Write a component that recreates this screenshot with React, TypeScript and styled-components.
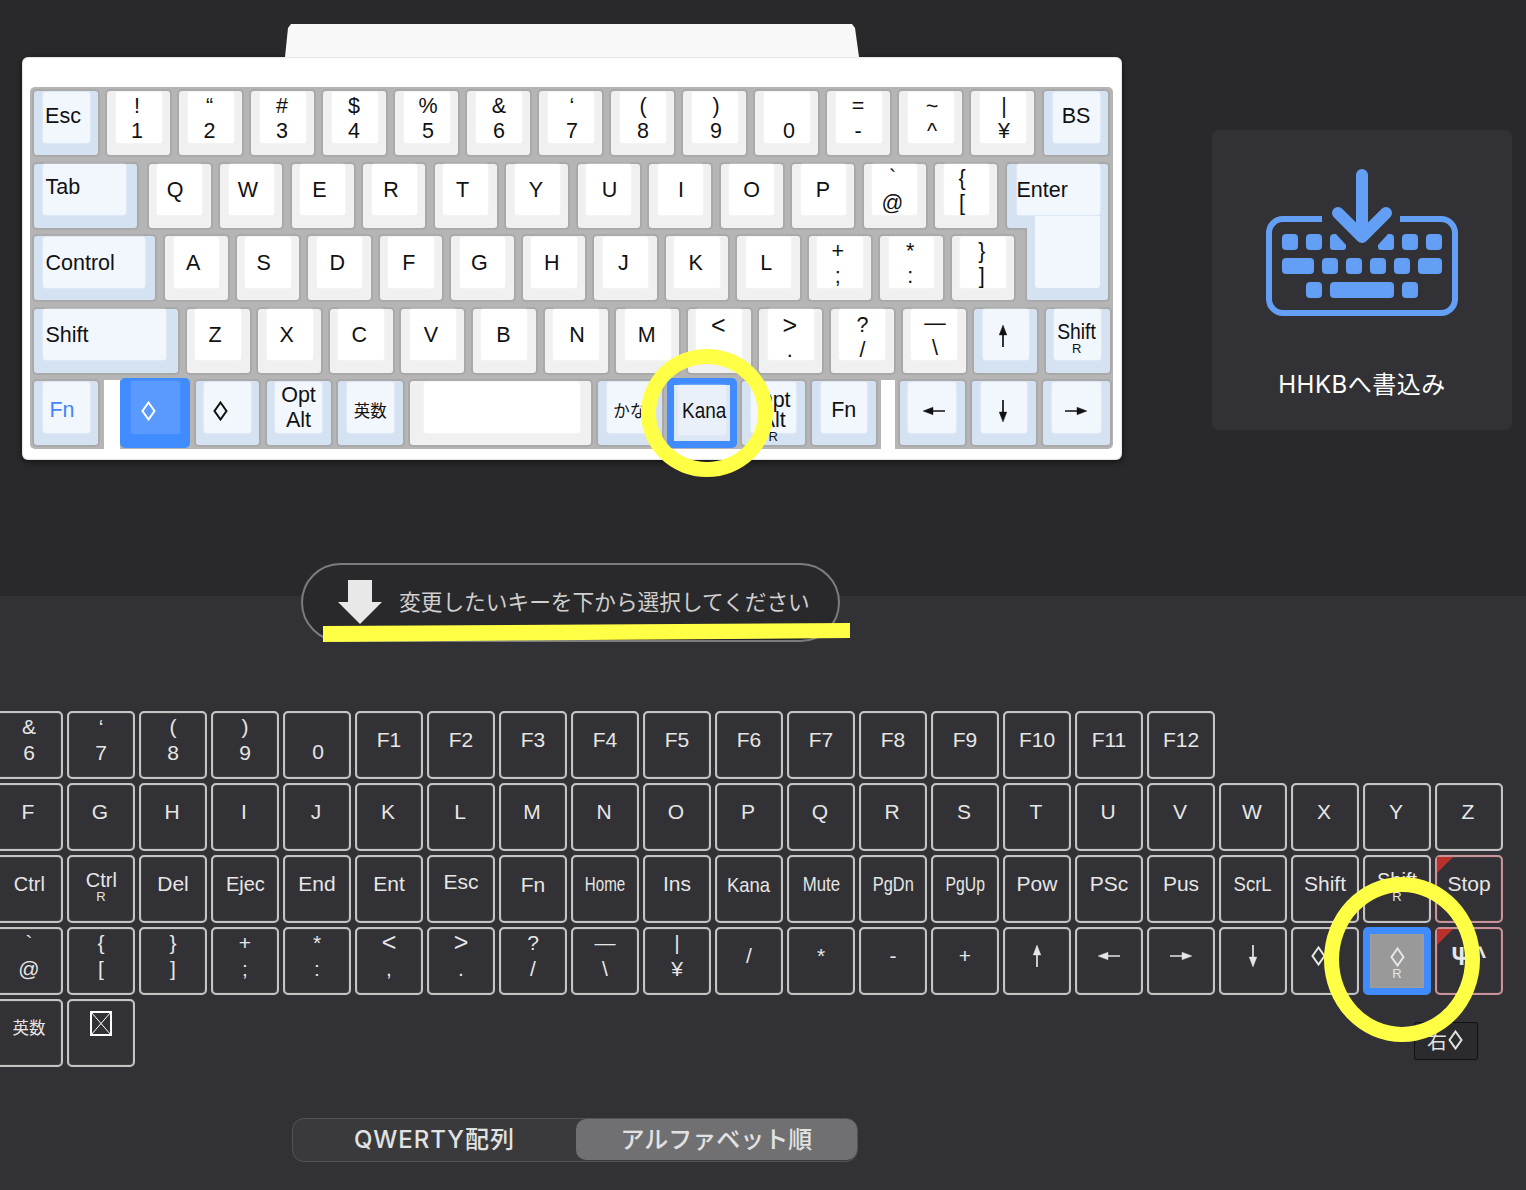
import React from "react";
import styled, { createGlobalStyle } from "styled-components";

type Cap = {
  lines?: string[];
  sub?: string;
  w?: number;
  ml?: number;
  mod?: boolean;
  left?: boolean;
  squeeze?: number;
  size?: number;
  firstSize?: number;
  dx?: number;
  dy?: number;
  face?: string;
  bold?: boolean;
  icon?: "up" | "down" | "left" | "right" | "cross" | "diamond";
  variant?: "blue" | "picked";
  warn?: boolean;
  fnBlue?: boolean;
};

const one = (a: string, extra: Cap = {}): Cap => ({ lines: [a], ...extra });
const two = (a: string, b: string, extra: Cap = {}): Cap => ({ lines: [a, b], ...extra });
const letters = (s: string, extra: Cap = {}): Cap[] => s.split("").map((c) => one(c, extra));
const nudged = (s: string, dxs: number[]): Cap[] => s.split("").map((c, i) => one(c, { dx: dxs[i] }));

const rowOne: Cap[] = [
  one("Esc", { mod: true, w: 68, dx: -3, dy: -2 }),
  two("!", "1", { dx: -1.5 }), two("“", "2", { dx: -1 }), two("#", "3", { dx: -0.5 }),
  two("$", "4", { dx: -0.5 }), two("%", "5", { dx: 1.5 }), two("&", "6", { dx: 0.5 }),
  two("‘", "7", { dx: 1.5 }), two("(", "8", { dx: 0.5 }), two(")", "9", { dx: 1.5 }),
  two("", "0", { dx: 2.5 }),
  two("=", "-", { dx: -0.5 }), two("~", "^", { dx: 1.5 }), two("|", "¥", { dx: 1.5 }),
  one("BS", { mod: true, w: 68, ml: 1, dy: -2 }),
];

const rowTwo: Cap[] = [
  one("Tab", { mod: true, w: 107, left: true, dx: 1, dy: -3, face: "0 3px 0 0" }),
  one("Q", { ml: 2, dx: -4.5 }),
  ...nudged("WERTYUIOP", [-3, -3, -3, -3, -1, 1, 1, 0, 0]),
  two("`", "@", { dx: -2 }), two("{", "[", { dx: -4 }),
];

const rowThree: Cap[] = [
  one("Control", { mod: true, w: 125, left: true, dx: 1, face: "0 2px 0 0" }),
  one("A", { ml: 1, dx: -3 }),
  ...nudged("SDFGHJKL", [-4, -2, -2, -3, -2, -2, -1, -2]),
  two("+", ";", { dx: -2 }), two("*", ":", { dx: -1 }), two("}", "]", { dx: -1 }),
];

const rowFour: Cap[] = [
  one("Shift", { mod: true, w: 148, left: true, dx: 1, face: "0 4px 0 0" }),
  ...nudged("ZXCVBNM", [-3, -3, -2, -2, -1, 1, -1]),
  two("<", ",", { dx: -1, firstSize: 25, dy: 2 }),
  two(">", ".", { dx: -1, firstSize: 25, dy: 2 }),
  two("?", "/", { dx: 0, dy: 2 }),
  two("—", "\\", { dx: 1 }),
  { icon: "up", mod: true, dx: -3 },
  one("Shift", { mod: true, sub: "R", squeeze: 0.9, dx: -1, dy: 3, w: 68 }),
];

const spaceLeft: Cap[] = [
  { icon: "diamond", variant: "blue", w: 70, dx: -7, dy: 2 },
  { icon: "diamond", mod: true, w: 67.5, dx: -6.5, dy: 2 },
  two("Opt", "Alt", { mod: true, w: 68, dy: -1 }),
  one("英数", { mod: true, w: 68.5, size: 16.5, dy: 3 }),
  { w: 184.5, face: "0 2px 0 5px" },
  one("かな", { mod: true, w: 67.5, size: 16.5, dy: 3 }),
  one("Kana", { mod: true, variant: "picked", w: 69.5, squeeze: 0.88, dx: 2 }),
  two("Opt", "Alt", { mod: true, sub: "R", w: 66.5, dy: 8 }),
  one("Fn", { mod: true, w: 67.5, dy: 2 }),
];

const arrowsRight: Cap[] = [
  { icon: "left", mod: true, w: 69, dx: 2, dy: 2 },
  { icon: "down", mod: true, w: 67.5, dx: -1, dy: 2 },
  { icon: "right", mod: true, w: 70.5, dy: 2 },
];

const chooser: Cap[] = [
  two("&", "6"), two("‘", "7"), two("(", "8"), two(")", "9"), two("", "0", { dx: 1 }),
  one("F1"), one("F2"), one("F3"), one("F4"), one("F5"), one("F6"),
  one("F7"), one("F8"), one("F9"), one("F10"), one("F11"), one("F12"),
  { lines: [] }, { lines: [] }, { lines: [] }, { lines: [] },
  ...letters("FGHIJKLMNOPQRSTUVWXYZ", { dx: -1 }),
  one("Ctrl", { squeeze: 0.95 }), one("Ctrl", { sub: "R", squeeze: 0.95, dy: 3 }),
  one("Del"), one("Ejec", { squeeze: 0.95 }), one("End"), one("Ent"), one("Esc", { dy: -2 }), one("Fn", { dy: 1 }),
  one("Home", { squeeze: 0.72 }), one("Ins"), one("Kana", { squeeze: 0.88, dy: 1 }),
  one("Mute", { squeeze: 0.8 }), one("PgDn", { squeeze: 0.78 }), one("PgUp", { squeeze: 0.75 }),
  one("Pow"), one("PSc"), one("Pus"), one("ScrL", { squeeze: 0.88 }), one("Shift"),
  one("Shift", { sub: "R", squeeze: 0.95, dy: 3 }), one("Stop", { warn: true }),
  two("`", "@"), two("{", "["), two("}", "]"), two("+", ";"), two("*", ":"),
  two("<", ",", { firstSize: 25 }), two(">", ".", { firstSize: 25 }), two("?", "/"), two("—", "\\"), two("|", "¥"),
  one("/"), one("*"), one("-"), one("+"),
  { icon: "up" }, { icon: "left" }, { icon: "right" }, { icon: "down" },
  { icon: "diamond", dx: -7 },
  { icon: "diamond", sub: "R", variant: "picked", dy: 5 },
  one("Ψ^", { warn: true, size: 25, dy: 1, bold: true }),
  one("英数", { size: 16.5, dy: 1 }), { icon: "cross" },
];

const GlobalStyle = createGlobalStyle`
  html, body {
    margin: 0;
    padding: 0;
    background: #323135;
  }
  * {
    box-sizing: border-box;
  }
`;

const Page = styled.div`
  position: relative;
  width: 1526px;
  height: 1190px;
  overflow: hidden;
  font-family: "Liberation Sans", "Noto Sans CJK JP", sans-serif;
`;

const TopArea = styled.section`
  display: flex;
  align-items: flex-start;
  height: 596px;
  padding: 24px 14px 0 22px;
  background: #29282b;
`;

const KeyboardWrap = styled.div`
  display: flex;
  flex-direction: column;
  width: 1100px;
`;

const TopBar = styled.div`
  width: 574px;
  height: 33px;
  margin-left: 263px;
  background: #f8f8f8;
  border-radius: 4px 4px 0 0;
  clip-path: polygon(0 100%, 3px 4px, 6px 0, 567px 0, 570px 4px, 574px 100%);
`;

const Board = styled.div`
  padding: 30px 8px 11px;
  background: #fff;
  border-radius: 6px;
  box-shadow: 0 2px 6px rgba(0, 0, 0, 0.55), inset 0 0 2px rgba(0, 0, 0, 0.35);
`;

const Plate = styled.div`
  display: flex;
  flex-direction: column;
  gap: 4.5px;
  width: 1083px;
  padding: 2px;
  font-size: 21.5px;
  background: #b5b5b5;
  border-radius: 5px;
`;

const Row = styled.div<{ $gap: number }>`
  display: flex;
  align-items: flex-start;
  gap: ${(p) => p.$gap}px;
  height: 68px;
`;

const Key = styled.div<{ $w: number; $ml: number; $mod: boolean; $variant?: string }>`
  flex: none;
  display: flex;
  width: ${(p) => p.$w}px;
  height: ${(p) => (p.$variant ? 70 : 68)}px;
  margin-left: ${(p) => p.$ml}px;
  margin-top: ${(p) => (p.$variant ? -1 : 0)}px;
  padding: ${(p) => (p.$variant === "picked" ? "0 4px 6px" : "0.5px 8.5px 12.5px")};
  color: #111;
  background: ${(p) => (p.$variant === "blue" ? "#408cff" : p.$variant === "picked" ? "#dce7f5" : p.$mod ? "#d5e2f2" : "#f0f0f0")};
  border: ${(p) => (p.$variant === "picked" ? "7px solid #408cff" : p.$variant === "blue" ? "2px solid #408cff" : "2px solid #a9a9a9")};
  border-radius: 5px;
`;

const faceColour = (p: { $mod: boolean; $variant?: string }) =>
  p.$variant === "blue" ? "#5a9aff" : p.$variant === "picked" ? "#e9f0f9" : p.$mod ? "#f2f7fe" : "#fff";

const KeyTop = styled.div<{ $mod: boolean; $variant?: string; $face?: string }>`
  flex: 1;
  display: flex;
  min-width: 0;
  margin: ${(p) => p.$face ?? "0"};
  background: ${faceColour};
  box-shadow: 0 0 2px ${faceColour};
  border-radius: 3px;
  color: ${(p) => (p.$variant === "blue" ? "#fff" : "inherit")};
`;

const EnterTop = styled(Key)`
  padding-left: 10px;
`;

const EnterBottom = styled.div`
  position: relative;
  flex: none;
  display: flex;
  width: 85px;
  height: 86px;
  margin: -18px 0 0 4px;
  padding: 0 8.5px 12.5px 10px;
  background: #d5e2f2;
  border-right: 2px solid #a9a9a9;
  border-bottom: 2px solid #a9a9a9;
  border-bottom-left-radius: 5px;
  border-bottom-right-radius: 5px;

  &::before {
    content: "";
    position: absolute;
    left: 0;
    top: 12px;
    bottom: 0;
    width: 2px;
    background: #a9a9a9;
  }
`;

const EnterFace = styled.div`
  flex: 1;
  background: #f2f7fe;
  border-radius: 0 0 3px 3px;
`;

const Notch = styled.div<{ $w: number }>`
  flex: none;
  width: ${(p) => p.$w}px;
  height: 69px;
  margin: 1px ${(p) => 13 - p.$w}px 0 0;
  background: #fff;
`;

const LegendBox = styled.div<{ $left?: boolean; $dx: number; $dy: number; $size?: number; $blue?: boolean; $bold?: boolean }>`
  flex: 1;
  min-width: 0;
  display: flex;
  flex-direction: column;
  justify-content: center;
  align-items: ${(p) => (p.$left ? "flex-start" : "center")};
  margin-left: ${(p) => (p.$left ? p.$dx : 0)}px;
  padding-top: ${(p) => Math.max(0, p.$dy * 2)}px;
  padding-bottom: ${(p) => Math.max(0, -p.$dy * 2)}px;
  padding-left: ${(p) => (p.$left ? 2 : Math.max(0, p.$dx * 2))}px;
  padding-right: ${(p) => (p.$left ? 0 : Math.max(0, -p.$dx * 2))}px;
  font-size: ${(p) => (p.$size ? `${p.$size}px` : "inherit")};
  font-weight: ${(p) => (p.$bold ? 700 : 400)};
  line-height: 25.5px;
  white-space: pre;
  color: ${(p) => (p.$blue ? "#4585f5" : "inherit")};
`;

const Line = styled.span<{ $squeeze?: number; $tight?: boolean; $size?: number }>`
  display: block;
  min-height: ${(p) => (p.$tight ? 20 : 25)}px;
  font-size: ${(p) => (p.$size ? `${p.$size}px` : "inherit")};
  line-height: ${(p) => (p.$tight ? "20px" : "inherit")};
  transform: scaleX(${(p) => p.$squeeze ?? 1});

  & + & {
    margin-top: ${(p) => (p.$tight ? 7 : 0)}px;
  }
`;

const Sub = styled.span`
  display: block;
  font-size: 13px;
  line-height: 14px;
`;

const ArrowSvg = styled.svg<{ $turn: number }>`
  display: block;
  width: 24px;
  height: 24px;
  fill: currentColor;
  stroke: currentColor;
  transform: rotate(${(p) => p.$turn}deg);
`;

const CrossSvg = styled.svg`
  display: block;
  width: 22px;
  height: 25px;
  margin-bottom: 9px;
`;

const DiamondSvg = styled.svg`
  display: block;
  flex: none;
  width: 15px;
  height: 20px;
  fill: none;
  stroke: currentColor;
  stroke-width: 2;
`;

const Panel = styled.button`
  display: flex;
  flex-direction: column;
  align-items: center;
  flex: none;
  width: 300px;
  height: 300px;
  margin: 106px 0 0 auto;
  padding: 39px 0 0;
  background: #323135;
  border: 0;
  border-radius: 7px;
  color: #fff;
  font-family: inherit;
`;

const PanelIcon = styled.svg`
  display: block;
  width: 192px;
  height: 147px;
  color: #629ff5;
`;

const PanelText = styled.span`
  margin-top: 52px;
  font-family: Inter, "Noto Sans CJK JP", sans-serif;
  font-size: 24px;
  letter-spacing: 0.5px;
  line-height: 34px;
`;

const BottomArea = styled.section`
  display: flex;
  flex-direction: column;
  height: 594px;
  background: #323135;
`;

const Prompt = styled.div`
  position: relative;
  display: flex;
  align-items: center;
  gap: 17px;
  width: 539px;
  height: 79px;
  margin: -33px 0 0 301px;
  padding: 0 0 2px 35px;
  background: #29282b;
  border: 2px solid #7c7c7e;
  border-radius: 40px;
`;

const PromptArrow = styled.svg`
  flex: none;
  width: 44px;
  height: 44px;
  fill: #e8e8e8;
`;

const PromptText = styled.span`
  padding-bottom: 2px;
  font-family: "Noto Sans CJK JP", sans-serif;
  font-size: 21.7px;
  white-space: nowrap;
  color: #cfcfcf;
`;

const Highlight = styled.div`
  position: absolute;
  left: 20px;
  top: 58px;
  width: 527px;
  height: 19px;
  background: #ffff46;
  clip-path: polygon(0 3px, 100% 0, 100% 15px, 0 19px);
`;

const Chooser = styled.div`
  display: grid;
  grid-template-columns: repeat(21, 68px);
  grid-auto-rows: 68px;
  gap: 4px;
  margin: 69px 0 0 -5px;
  font-size: 21px;
`;

const DarkKey = styled.div<{ $warn?: boolean; $picked?: boolean }>`
  position: relative;
  display: flex;
  padding-bottom: ${(p) => (p.$picked ? 4 : 11)}px;
  color: #e6e6e6;
  background: ${(p) => (p.$picked ? "#999" : "transparent")};
  border: ${(p) => (p.$picked ? "7px solid #408cff" : `2px solid ${p.$warn ? "#c8949a" : "#c4c4c4"}`)};
  box-shadow: inset 0 0 1px ${(p) => (p.$warn ? "#c8949a" : "#c4c4c4")};
  border-radius: 5px;

  &::before {
    content: ${(p) => (p.$warn ? '""' : "none")};
    position: absolute;
    left: 0;
    top: 0;
    width: 16px;
    height: 16px;
    background: #b8312a;
    clip-path: polygon(0 0, 100% 0, 0 100%);
  }
`;

const Ghost = styled.div`
  visibility: hidden;
`;

const Tooltip = styled.div`
  position: absolute;
  left: 44px;
  top: 88px;
  z-index: 3;
  display: flex;
  align-items: center;
  gap: 1px;
  width: 64px;
  height: 38px;
  padding: 0 0 2px 12px;
  font-size: 20px;
  color: #e2e2e2;
  background: #2b2a2d;
  border: 1px solid #111;
  border-radius: 2px;
`;

const Toggle = styled.div`
  display: flex;
  width: 566px;
  height: 44px;
  margin: 51px 0 0 292px;
  background: #3a3a3c;
  border: 1.5px solid #535355;
  border-radius: 12px;
  font-family: Inter, "Noto Sans CJK JP", sans-serif;
  font-size: 24px;
  font-weight: 500;
`;

const ToggleItem = styled.div<{ $active?: boolean }>`
  display: flex;
  align-items: center;
  justify-content: center;
  width: ${(p) => (p.$active ? 281 : 283)}px;
  height: 41px;
  padding-bottom: 4px;
  letter-spacing: ${(p) => (p.$active ? 0 : 1)}px;
  color: #e2e2e2;
  background: ${(p) => (p.$active ? "#707072" : "transparent")};
  border-radius: 10px;
`;

const Ring = styled.div<{ $x: number; $y: number; $w: number; $h: number }>`
  position: absolute;
  left: ${(p) => p.$x}px;
  top: ${(p) => p.$y}px;
  z-index: 5;
  width: ${(p) => p.$w}px;
  height: ${(p) => p.$h}px;
  border: 15px solid #ffff46;
  border-radius: 50%;
  pointer-events: none;
`;

const turns = { up: 0, right: 90, down: 180, left: 270 };

function Arrow({ dir }: { dir: keyof typeof turns }) {
  return (
    <ArrowSvg $turn={turns[dir]} viewBox="0 0 24 24">
      <path d="M12 8V23" strokeWidth="1.7" fill="none" />
      <path d="M8.2 11L12 1L15.8 11Z" strokeWidth="0.4" />
    </ArrowSvg>
  );
}

function Diamond() {
  return (
    <DiamondSvg viewBox="0 0 15 20">
      <path d="M7.5 1.5L13.5 10L7.5 18.5L1.5 10Z" />
    </DiamondSvg>
  );
}

function Legend({ cap }: { cap: Cap }) {
  return (
    <LegendBox $left={cap.left} $dx={cap.dx ?? 0} $dy={cap.dy ?? 0} $size={cap.size} $blue={cap.fnBlue} $bold={cap.bold}>
      {cap.icon === "cross" ? (
        <CrossSvg viewBox="0 0 22 25">
          <rect x="1" y="1" width="20" height="23" fill="none" stroke="#fff" strokeWidth="2" />
          <path d="M1 1L21 24M21 1L1 24" fill="none" stroke="#fff" strokeWidth="1" />
        </CrossSvg>
      ) : cap.icon === "diamond" ? (
        <Diamond />
      ) : cap.icon ? (
        <Arrow dir={cap.icon} />
      ) : null}
      {cap.lines?.map((text, i) => (
        <Line key={i} $squeeze={cap.squeeze} $tight={!!cap.sub} $size={i === 0 ? cap.firstSize : undefined}>
          {text}
        </Line>
      ))}
      {cap.sub && <Sub>{cap.sub}</Sub>}
    </LegendBox>
  );
}

function BoardKey({ cap, width }: { cap: Cap; width: number }) {
  return (
    <Key $w={cap.w ?? width} $ml={cap.ml ?? 0} $mod={!!cap.mod} $variant={cap.variant}>
      <KeyTop $mod={!!cap.mod} $variant={cap.variant} $face={cap.face}>
        <Legend cap={{ ...cap, dy: (cap.dy ?? 0) + 1.5 }} />
      </KeyTop>
    </Key>
  );
}

function KeyboardIcon() {
  return (
    <PanelIcon viewBox="0 0 192 147">
      <path
        d="M56 50H17A14 14 0 0 0 3 64V130A14 14 0 0 0 17 144H175A14 14 0 0 0 189 130V64A14 14 0 0 0 175 50H134"
        fill="none"
        stroke="currentColor"
        strokeWidth="6"
      />
      <g fill="currentColor">
        <rect x="16" y="65" width="16" height="16" rx="4" />
        <rect x="40" y="65" width="16" height="16" rx="4" />
        <path d="M64 69Q64 65 68 65H70L80 76V78Q80 81 77 81H67Q64 81 64 78Z" />
        <path d="M128 69Q128 65 124 65H122L112 76V78Q112 81 115 81H125Q128 81 128 78Z" />
        <rect x="136" y="65" width="16" height="16" rx="4" />
        <rect x="160" y="65" width="16" height="16" rx="4" />
        <rect x="16" y="89" width="32" height="16" rx="4" />
        <rect x="56" y="89" width="16" height="16" rx="4" />
        <rect x="80" y="89" width="16" height="16" rx="4" />
        <rect x="104" y="89" width="16" height="16" rx="4" />
        <rect x="128" y="89" width="16" height="16" rx="4" />
        <rect x="152" y="89" width="24" height="16" rx="4" />
        <rect x="40" y="113" width="16" height="16" rx="4" />
        <rect x="64" y="113" width="64" height="16" rx="4" />
        <rect x="136" y="113" width="16" height="16" rx="4" />
      </g>
      <path d="M96 6V68M72 44L96 68L120 44" fill="none" stroke="currentColor" strokeWidth="12" strokeLinecap="round" strokeLinejoin="round" />
    </PanelIcon>
  );
}

export default function App() {
  return (
    <Page>
      <GlobalStyle />
      <TopArea>
        <KeyboardWrap>
          <TopBar />
          <Board>
            <Plate>
              <Row $gap={5}>
                {rowOne.map((cap, i) => (
                  <BoardKey key={i} cap={cap} width={67} />
                ))}
              </Row>
              <Row $gap={5.5}>
                {rowTwo.map((cap, i) => (
                  <BoardKey key={i} cap={cap} width={66} />
                ))}
                <EnterTop $w={105.5} $ml={0} $mod>
                  <KeyTop $mod>
                    <Legend cap={one("Enter", { left: true, dx: -2, dy: 1.5 })} />
                  </KeyTop>
                </EnterTop>
              </Row>
              <Row $gap={5}>
                {rowThree.map((cap, i) => (
                  <BoardKey key={i} cap={cap} width={66.5} />
                ))}
                <EnterBottom>
                  <EnterFace />
                </EnterBottom>
              </Row>
              <Row $gap={4.6}>
                {rowFour.map((cap, i) => (
                  <BoardKey key={i} cap={cap} width={67} />
                ))}
              </Row>
              <Row $gap={3.5}>
                <BoardKey cap={one("Fn", { mod: true, fnBlue: true, w: 68, dx: -4, dy: 2 })} width={68} />
                <Notch $w={16} />
                {spaceLeft.map((cap, i) => (
                  <BoardKey key={i} cap={cap} width={67} />
                ))}
                <Notch $w={14} />
                {arrowsRight.map((cap, i) => (
                  <BoardKey key={i} cap={cap} width={67} />
                ))}
              </Row>
            </Plate>
          </Board>
        </KeyboardWrap>
        <Panel>
          <KeyboardIcon />
          <PanelText>HHKBへ書込み</PanelText>
        </Panel>
      </TopArea>

      <BottomArea>
        <Prompt>
          <PromptArrow viewBox="0 0 44 44">
            <path d="M10 0H34V22H44L22 44L0 22H10Z" />
          </PromptArrow>
          <PromptText>変更したいキーを下から選択してください</PromptText>
          <Highlight />
        </Prompt>

        <Chooser>
          {chooser.map((cap, i) =>
            cap.lines?.length === 0 ? (
              <Ghost key={i} />
            ) : (
              <DarkKey key={i} $warn={cap.warn} $picked={cap.variant === "picked"}>
                <Legend cap={cap} />
                {cap.variant === "picked" && (
                  <Tooltip>
                    右
                    <Diamond />
                  </Tooltip>
                )}
              </DarkKey>
            ),
          )}
        </Chooser>

        <Toggle>
          <ToggleItem>QWERTY配列</ToggleItem>
          <ToggleItem $active>アルファベット順</ToggleItem>
        </Toggle>
      </BottomArea>

      <Ring $x={641} $y={349} $w={132} $h={128} />
      <Ring $x={1324} $y={877} $w={156} $h={165} />
    </Page>
  );
}
